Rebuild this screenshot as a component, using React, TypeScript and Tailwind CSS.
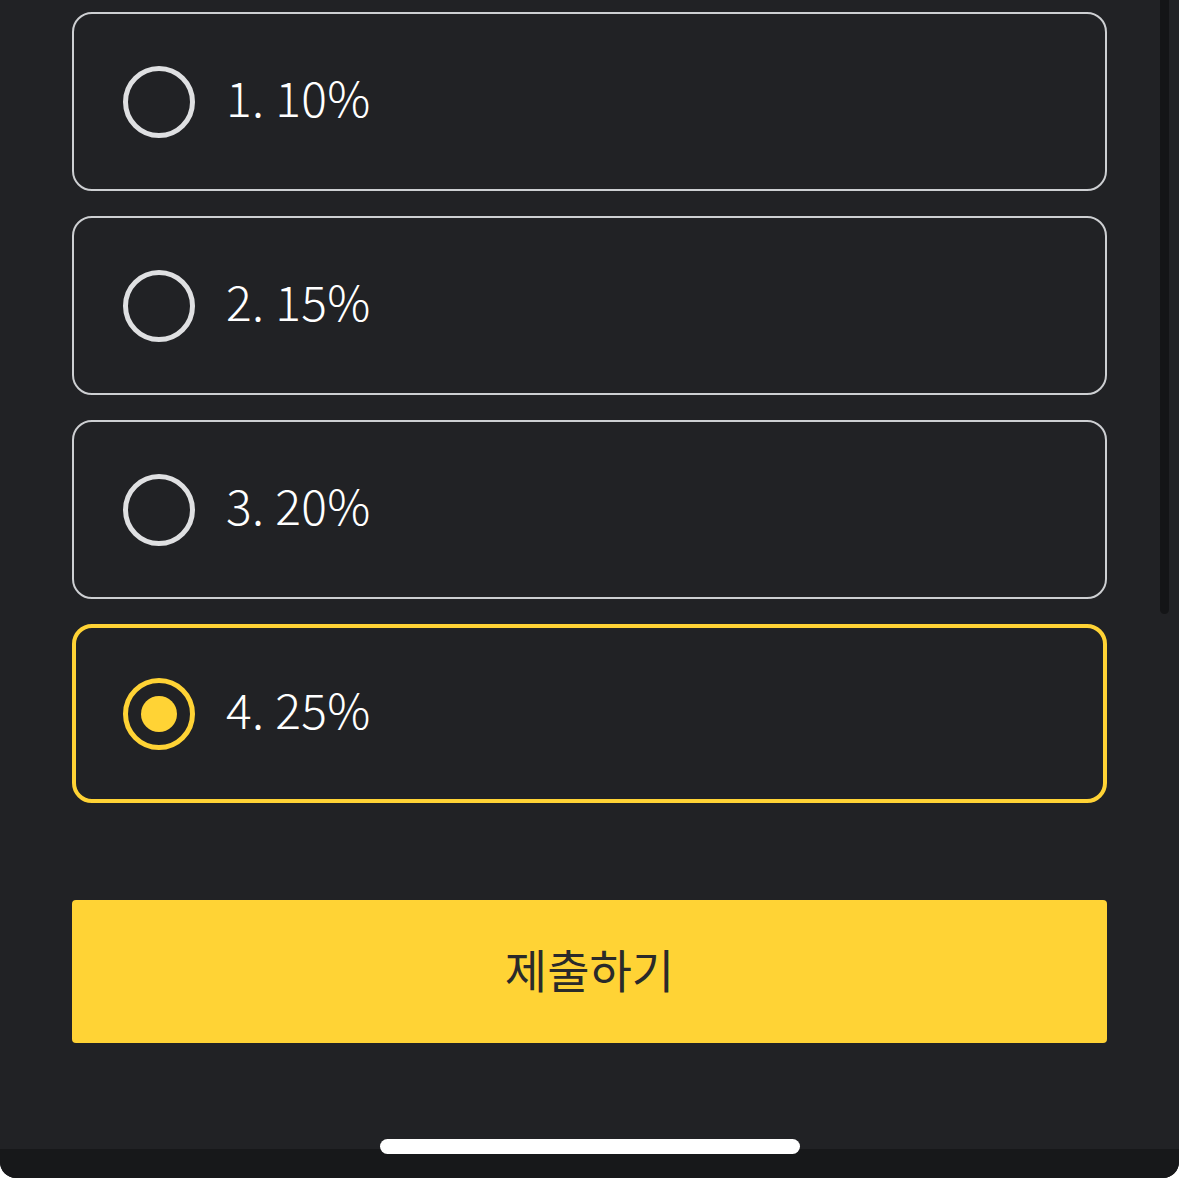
import React from "react";

const options = [
  { label: "1. 10%", selected: false },
  { label: "2. 15%", selected: false },
  { label: "3. 20%", selected: false },
  { label: "4. 25%", selected: true },
];

export default function App() {
  return (
    <div className="w-[1179px] h-[1178px] bg-white">
      <div
        className="relative w-[1179px] h-[1178px] bg-[#212225] rounded-b-[16px] overflow-hidden flex flex-col"
        style={{ fontFamily: '"Noto Sans CJK KR", "Noto Sans", sans-serif' }}
      >
        <div className="flex flex-col gap-[25px] px-[72px] pt-[12px]">
          {options.map((o) => (
            <div
              key={o.label}
              className={
                o.selected
                  ? "h-[179px] rounded-[20px] border-[4px] border-[#ffd335] flex items-center pl-[47px]"
                  : "h-[179px] rounded-[20px] border-[2px] border-[#cdcfd2] flex items-center pl-[49px]"
              }
            >
              {o.selected ? (
                <div className="w-[72px] h-[72px] rounded-full border-[5px] border-[#ffd335] flex items-center justify-center shrink-0">
                  <div className="w-[36px] h-[36px] rounded-full bg-[#ffd335]" />
                </div>
              ) : (
                <div className="w-[72px] h-[72px] rounded-full border-[5px] border-[#dfe0e2] shrink-0" />
              )}
              <span className="ml-[31px] mb-[12px] text-[48px] leading-none text-white font-light tracking-[0.3px]">
                {o.label}
              </span>
            </div>
          ))}
        </div>
        <div className="px-[72px] mt-[97px]">
          <button className="w-full h-[143px] rounded-[4px] bg-[#ffd335] flex items-center justify-center text-[46px] leading-none text-[#2a2a2a] font-normal pb-[8px]">
            제출하기
          </button>
        </div>
        <div className="mt-auto h-[29px] bg-[#17181a]" />
        <div className="absolute left-[380px] top-[1139px] w-[420px] h-[15px] rounded-full bg-white" />
        <div className="absolute left-[1160px] top-0 w-[9px] h-[614px] rounded-b-full bg-[#141517]" />
      </div>
    </div>
  );
}
